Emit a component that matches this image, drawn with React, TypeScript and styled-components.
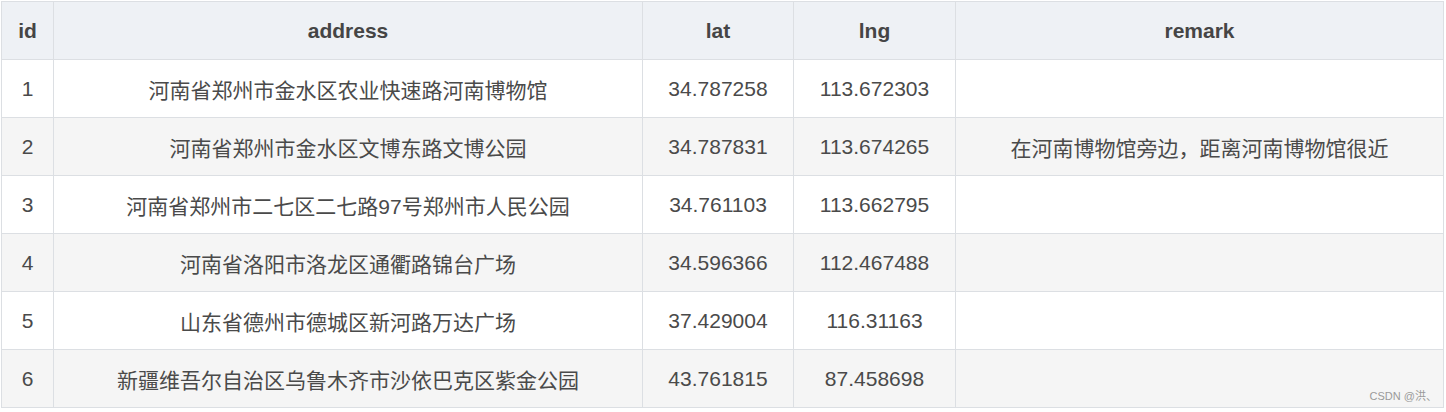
import React from "react";
import styled, { createGlobalStyle } from "styled-components";

const GlobalStyle = createGlobalStyle`
  html, body { margin: 0; padding: 0; background: #ffffff; }
  body { font-family: "Liberation Sans", Arial, "Noto Sans CJK SC", sans-serif; }
`;

const Page = styled.div`
  position: relative;
  width: 1446px;
  height: 412px;
  padding: 1px 0 0 1px;
  box-sizing: border-box;
  overflow: hidden;
`;

const Table = styled.table`
  border-collapse: separate;
  border-spacing: 0;
  table-layout: fixed;
  width: 1443px;
  border-left: 1px solid #dcdfe3;
  border-top: 1px solid #dcdfe3;
  font-family: "Liberation Sans", Arial, "Noto Sans CJK SC", sans-serif;
  font-size: 21px;
`;

const Col = styled.col<{ $w: number }>`
  width: ${(p) => p.$w}px;
`;

const HeadCell = styled.th`
  box-sizing: border-box;
  height: 58px;
  padding: 0;
  background: #eef1f5;
  color: #454545;
  font-weight: bold;
  text-align: center;
  vertical-align: middle;
  border-right: 1px solid #dcdfe3;
  border-bottom: 1px solid #dcdfe3;
`;

const Row = styled.tr<{ $striped: boolean }>`
  background: ${(p) => (p.$striped ? "#f5f5f5" : "#ffffff")};
`;

const Cell = styled.td`
  box-sizing: border-box;
  height: 58px;
  padding: 0;
  color: #4a4a4a;
  font-weight: normal;
  text-align: center;
  vertical-align: middle;
  white-space: nowrap;
  border-right: 1px solid #dcdfe3;
  border-bottom: 1px solid #dcdfe3;
`;

const Watermark = styled.div`
  position: absolute;
  right: 9px;
  bottom: 9px;
  font-family: "Liberation Sans", Arial, "Noto Sans CJK SC", sans-serif;
  font-size: 11px;
  color: #9a9a9a;
`;

const rows = [
  { id: 1, address: "河南省郑州市金水区农业快速路河南博物馆", lat: "34.787258", lng: "113.672303", remark: "" },
  { id: 2, address: "河南省郑州市金水区文博东路文博公园", lat: "34.787831", lng: "113.674265", remark: "在河南博物馆旁边，距离河南博物馆很近" },
  { id: 3, address: "河南省郑州市二七区二七路97号郑州市人民公园", lat: "34.761103", lng: "113.662795", remark: "" },
  { id: 4, address: "河南省洛阳市洛龙区通衢路锦台广场", lat: "34.596366", lng: "112.467488", remark: "" },
  { id: 5, address: "山东省德州市德城区新河路万达广场", lat: "37.429004", lng: "116.31163", remark: "" },
  { id: 6, address: "新疆维吾尔自治区乌鲁木齐市沙依巴克区紫金公园", lat: "43.761815", lng: "87.458698", remark: "" },
];

const widths = [52, 589, 151, 162, 488];
const headers = ["id", "address", "lat", "lng", "remark"];

export default function App() {
  return (
    <>
      <GlobalStyle />
      <Page>
        <Table>
          <colgroup>
            {widths.map((w, i) => (
              <Col key={i} $w={w} />
            ))}
          </colgroup>
          <thead>
            <tr>
              {headers.map((h) => (
                <HeadCell key={h}>{h}</HeadCell>
              ))}
            </tr>
          </thead>
          <tbody>
            {rows.map((r, i) => (
              <Row key={r.id} $striped={i % 2 === 1}>
                <Cell>{r.id}</Cell>
                <Cell>{r.address}</Cell>
                <Cell>{r.lat}</Cell>
                <Cell>{r.lng}</Cell>
                <Cell>{r.remark}</Cell>
              </Row>
            ))}
          </tbody>
        </Table>
        <Watermark>CSDN @洪、</Watermark>
      </Page>
    </>
  );
}
